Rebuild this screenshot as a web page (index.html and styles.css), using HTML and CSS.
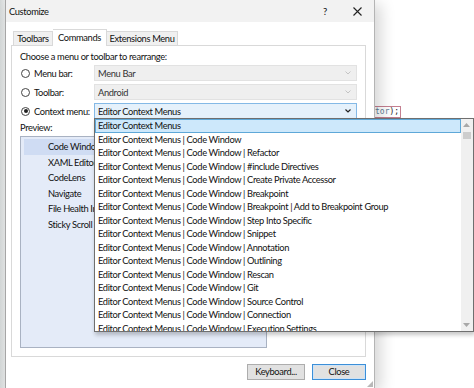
FILE: index.html
```html
<!DOCTYPE html>
<html>
<head>
<meta charset="utf-8">
<link rel="stylesheet" href="styles.css">
</head>
<body>
<div class="screen">
  <div class="behind"></div>
  <div class="dialog">
    <div class="titlebar">
      <span class="title">Customize</span>
      <span class="help">?</span>
      <span class="closex"><svg width="9" height="9" viewBox="0 0 9 9"><path d="M0.5 0.5L8.5 8.5M8.5 0.5L0.5 8.5" stroke="#222" stroke-width="1.1" fill="none"/></svg></span>
    </div>
    <div class="dbody">
      <div class="tabs">
        <div class="tab t1">Toolbars</div>
        <div class="tab t2 sel">Commands</div>
        <div class="tab t3">Extensions Menu</div>
      </div>
      <div class="panel">
        <div class="hint">Choose a menu or toolbar to rearrange:</div>
        <div class="row first">
          <div class="opt"><span class="radio"></span><span>Menu bar:</span></div>
          <div class="combo dis"><span>Menu Bar</span><svg class="chev" width="6" height="4" viewBox="0 0 6 4"><path d="M0.5 0.5L3 3L5.5 0.5" stroke="#c4c4c4" fill="none"/></svg></div>
        </div>
        <div class="row">
          <div class="opt"><span class="radio"></span><span>Toolbar:</span></div>
          <div class="combo dis"><span>Android</span><svg class="chev" width="6" height="4" viewBox="0 0 6 4"><path d="M0.5 0.5L3 3L5.5 0.5" stroke="#c4c4c4" fill="none"/></svg></div>
        </div>
        <div class="row">
          <div class="opt"><span class="radio on"></span><span>Context menu:</span></div>
          <div class="combo act"><span>Editor Context Menus</span><svg class="chev" width="6" height="4" viewBox="0 0 6 4"><path d="M0.5 0.5L3 3L5.5 0.5" stroke="#222" stroke-width="1.2" fill="none"/></svg></div>
        </div>
        <div class="plabel">Preview:</div>
        <div class="preview">
          <div class="pitem sel">Code Window</div>
          <div class="pitem">XAML Editor</div>
          <div class="pitem">CodeLens</div>
          <div class="pitem">Navigate</div>
          <div class="pitem">File Health Indicator</div>
          <div class="pitem">Sticky Scroll</div>
        </div>
      </div>
      <div class="buttons">
        <div class="btn kb">Keyboard...</div>
        <div class="btn def">Close</div>
      </div>
    </div>
    <div class="grip"></div>
  </div>
  <div class="code"><span class="ident">tor</span>);</div>
  <div class="dropdown">
    <div class="items">
      <div class="item hl">Editor Context Menus</div>
      <div class="item">Editor Context Menus | Code Window</div>
      <div class="item">Editor Context Menus | Code Window | Refactor</div>
      <div class="item">Editor Context Menus | Code Window | #include Directives</div>
      <div class="item">Editor Context Menus | Code Window | Create Private Accessor</div>
      <div class="item">Editor Context Menus | Code Window | Breakpoint</div>
      <div class="item">Editor Context Menus | Code Window | Breakpoint | Add to Breakpoint Group</div>
      <div class="item">Editor Context Menus | Code Window | Step Into Specific</div>
      <div class="item">Editor Context Menus | Code Window | Snippet</div>
      <div class="item">Editor Context Menus | Code Window | Annotation</div>
      <div class="item">Editor Context Menus | Code Window | Outlining</div>
      <div class="item">Editor Context Menus | Code Window | Rescan</div>
      <div class="item">Editor Context Menus | Code Window | Git</div>
      <div class="item">Editor Context Menus | Code Window | Source Control</div>
      <div class="item">Editor Context Menus | Code Window | Connection</div>
      <div class="item">Editor Context Menus | Code Window | Execution Settings</div>
    </div>
    <div class="sbar">
      <svg class="arr up" width="7" height="4" viewBox="0 0 7 4"><path d="M0 4L3.5 0L7 4Z" fill="#a8a8a8"/></svg>
      <div class="thumb"></div>
      <svg class="arr down" width="7" height="4" viewBox="0 0 7 4"><path d="M0 0L3.5 4L7 0Z" fill="#a8a8a8"/></svg>
    </div>
  </div>
</div>
</body>
</html>
```
FILE: styles.css
```css
* { box-sizing: border-box; }
html, body {
  margin: 0;
  padding: 0;
}
body {
  width: 474px;
  height: 388px;
  overflow: hidden;
  background: #fff;
  font-family: Lato, "Liberation Sans", sans-serif;
  font-size: 9.3px;
  letter-spacing: -0.35px;
  color: #111;
}
.screen {
  position: relative;
  display: flex;
  width: 474px;
  height: 388px;
}
.behind {
  width: 5px;
  flex: none;
  background: linear-gradient(90deg, #d4d8d8, #e6e8e8);
}
.dialog {
  position: relative;
  z-index: 2;
  width: 370px;
  flex: none;
  display: flex;
  flex-direction: column;
  background: #fff;
  border-left: 1px solid #a6a6a6;
  border-right: 1px solid #b4b4b4;
  box-shadow: 6px 4px 14px rgba(0, 0, 0, 0.16);
}
.titlebar {
  height: 22px;
  flex: none;
  display: flex;
  align-items: center;
  background: #f2f2f2;
  padding-left: 3px;
}
.title { flex: 1; }
.help {
  width: 10px;
  margin-right: 23px;
  font-size: 9.5px;
  text-align: center;
}
.closex {
  display: flex;
  margin-right: 12px;
}
.dbody {
  padding: 7px 8px 0 5px;
}
.tabs {
  display: flex;
  align-items: flex-end;
  height: 16px;
  margin-left: 2px;
  position: relative;
  z-index: 1;
}
.tab {
  height: 14px;
  line-height: 13px;
  text-align: center;
  background: #f0f0f0;
  border: 1px solid #d9d9d9;
  border-bottom: none;
}
.t1 { width: 40px; }
.t2 { width: 54px; }
.t3 { width: 71px; border-left: none; }
.tab.sel {
  height: 17px;
  line-height: 15px;
  margin-bottom: -1px;
  background: #fff;
  border-left: none;
}
.panel {
  width: 355px;
  height: 312px;
  border: 1px solid #d9d9d9;
  padding: 4px 8px 0 8px;
}
.hint {
  height: 14px;
  line-height: 14px;
}
.row {
  display: grid;
  grid-template-columns: 74px 1fr;
  align-items: center;
  height: 16px;
  margin-top: 3px;
}
.row.first { margin-top: 1px; }
.opt {
  display: flex;
  align-items: center;
}
.radio {
  width: 9px;
  height: 9px;
  margin: 0 4px 0 1px;
  border: 1px solid #444;
  border-radius: 50%;
  background: #fff;
  display: flex;
  align-items: center;
  justify-content: center;
}
.radio.on::after {
  content: "";
  width: 4px;
  height: 4px;
  border-radius: 50%;
  background: #222;
}
.combo {
  height: 16px;
  display: flex;
  align-items: center;
  justify-content: space-between;
  padding: 0 5px 0 3px;
  border: 1px solid #e2e2e2;
}
.combo.dis {
  background: #efefef;
  color: #333;
}
.combo.act {
  background: #e5f1fb;
  border-color: #84b9e6;
}
.plabel {
  height: 14px;
  line-height: 14px;
  margin-top: 2px;
}
.preview {
  width: 247px;
  height: 212px;
  margin-top: 1px;
  background: #e4ebf8;
  border: 1px solid #a9b2c2;
  padding: 2px 0 0 3px;
}
.pitem {
  height: 15.6px;
  line-height: 15.6px;
  padding-left: 24px;
  white-space: nowrap;
  overflow: hidden;
}
.pitem.sel { background: #cfdcf3; }
.buttons {
  display: flex;
  justify-content: flex-end;
  gap: 7px;
  margin-top: 7px;
}
.btn {
  height: 16px;
  line-height: 14px;
  text-align: center;
  background: #e1e1e1;
  border: 1px solid #adadad;
}
.btn.kb { width: 58px; }
.btn.def {
  width: 54px;
  border-color: #3c8fd8;
  box-shadow: inset 0 0 0 1px #cfe3f5;
}
.grip {
  position: absolute;
  right: 1px;
  bottom: 1px;
  width: 6px;
  height: 6px;
  background-image: radial-gradient(circle, #b8b8b8 0.8px, transparent 1px);
  background-size: 2px 2px;
  clip-path: polygon(100% 0, 100% 100%, 0 100%);
}
.code {
  position: absolute;
  z-index: 1;
  left: 371px;
  top: 106px;
  height: 12px;
  padding: 0 1px 0 3px;
  font-family: "DejaVu Sans Mono", "Liberation Mono", monospace;
  font-size: 8px;
  letter-spacing: 0;
  line-height: 10px;
  color: #222;
  border: 1px solid #c47f90;
}
.code .ident { color: #5f7d96; }
.dropdown {
  position: absolute;
  z-index: 5;
  left: 94px;
  top: 118px;
  width: 380px;
  height: 214px;
  background: #fff;
  border: 1px solid #6f6f6f;
  box-shadow: 1px 3px 4px rgba(0, 0, 0, 0.22);
  display: flex;
  overflow: hidden;
}
.items {
  flex: 1;
  overflow: hidden;
}
.item {
  height: 13.5px;
  line-height: 13.5px;
  padding-left: 3px;
  white-space: nowrap;
}
.item.hl {
  background: #cde8fb;
  border: 1px solid #5ea8d8;
  line-height: 11.5px;
  padding-left: 2px;
}
.sbar {
  position: relative;
  width: 12px;
  flex: none;
  background: #f0f0f0;
}
.arr {
  position: absolute;
  left: 2px;
}
.arr.up { top: 4px; }
.arr.down { bottom: 4px; }
.thumb {
  position: absolute;
  left: 2px;
  top: 13px;
  width: 8px;
  height: 7px;
  background: #cdcdcd;
}
```
